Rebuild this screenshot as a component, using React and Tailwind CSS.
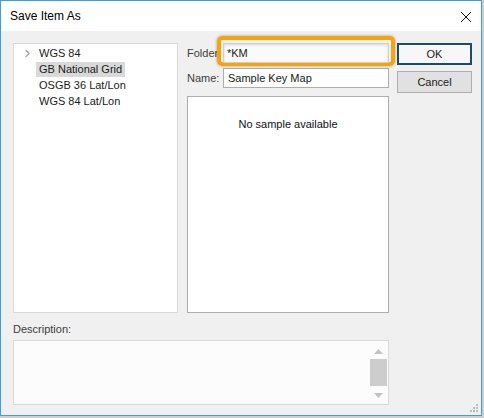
import { ChevronRight } from 'lucide-react'

const items = ['WGS 84', 'GB National Grid', 'OSGB 36 Lat/Lon', 'WGS 84 Lat/Lon']

function Grip() {
  const dots = [[7, 0], [4, 3], [7, 3], [1, 6], [4, 6], [7, 6]]
  return (
    <svg width="9" height="9" className="absolute right-[3px] bottom-[2px]">
      {dots.map(([x, y], i) => (
        <rect key={i} x={x} y={y} width="2" height="2" fill="#bcbcbc" />
      ))}
    </svg>
  )
}

export default function App() {
  return (
    <div className="w-[484px] h-[418px] bg-[#cfcfcf] font-['Liberation_Sans',Arial,sans-serif] text-[11px]">
      <div className="relative w-[482px] h-[416px] border border-[#3d9fe3] bg-[#f0f0f0] flex flex-col">
        <div className="h-[30px] bg-white flex items-center justify-between pl-[9px] pr-[9px] shrink-0">
          <span className="text-[12px] text-black">Save Item As</span>
          <svg width="12" height="12" viewBox="0 0 12 12" className="mt-[1px]">
            <path d="M1 1 L11 11 M11 1 L1 11" stroke="#111" strokeWidth="1" />
          </svg>
        </div>

        <div className="pl-[12px] pt-[12px] flex flex-col">
          <div className="flex">
            <div className="w-[165px] h-[270px] bg-white border border-[#d9d9d9] pt-[1px] pl-[8px]">
              {items.map((label, i) => (
                <div key={label} className="flex items-center h-[16px]">
                  <span className="w-[14px] flex items-center">
                    {i === 0 && <ChevronRight size={13} strokeWidth={2} className="text-[#9e9e9e] -ml-[1px]" />}
                  </span>
                  <span
                    className={
                      'px-[3px] h-[15px] leading-[15px] text-[#1a1a1a] ' + (i === 1 ? 'bg-[#d9d9d9]' : '')
                    }
                  >
                    {label}
                  </span>
                </div>
              ))}
            </div>

            <div className="ml-[9px] w-[202px] flex flex-col">
              <div className="flex items-center h-[20px]">
                <span className="w-[36px] text-[#3c3c3c]">Folder</span>
                <div className="relative w-[166px] h-[20px]">
                  <div className="absolute -left-[6px] -right-[6px] -top-[7px] -bottom-[3px] border-[4px] border-[#f5a50a] rounded-[5px] shadow-[0_0_3px_rgba(0,0,0,0.35)]" />
                  <div className="relative w-full h-full bg-[#fafafa] border border-[#d0d0d0] px-[3px] leading-[18px] text-[#1a1a1a] shadow-[inset_0_1px_3px_rgba(0,0,0,0.15)]">
                    *KM
                  </div>
                </div>
              </div>
              <div className="flex items-center h-[20px] mt-[5px]">
                <span className="w-[36px] text-[#3c3c3c]">Name:</span>
                <div className="w-[166px] h-[20px] bg-white border border-[#adadad] px-[4px] leading-[18px] text-[#1a1a1a]">
                  Sample Key Map
                </div>
              </div>
              <div className="mt-[8px] h-[217px] bg-white border border-[#adadad] flex justify-center pt-[19px] text-[#111]">
                No sample available
              </div>
            </div>

            <div className="ml-[8px] flex flex-col gap-[6px]">
              <div className="w-[75px] h-[22px] bg-[#f7f7f7] border-[2px] border-[#1a4a6c] flex items-center justify-center text-[#1a1a1a]">
                OK
              </div>
              <div className="w-[75px] h-[22px] bg-[#e1e1e1] border border-[#adadad] flex items-center justify-center text-[#1a1a1a]">
                Cancel
              </div>
            </div>
          </div>

          <div className="mt-[9px] text-[#3c3c3c] leading-[14px]">Description:</div>
          <div className="mt-[4px] w-[376px] h-[65px] bg-[#fcfcfc] border border-[#d9d9d9] flex justify-end pr-[1px]">
            <div className="w-[17px] flex flex-col items-center pt-[8px]">
              <svg width="9" height="5" viewBox="0 0 9 5">
                <path d="M0 5 L4.5 0 L9 5 Z" fill="#c2c2c2" />
              </svg>
              <div className="mt-[5px] w-[17px] h-[27px] bg-[#cdcdcd]" />
              <svg width="9" height="5" viewBox="0 0 9 5" className="mt-[7px]">
                <path d="M0 0 L9 0 L4.5 5 Z" fill="#c2c2c2" />
              </svg>
            </div>
          </div>
        </div>
        <Grip />
      </div>
    </div>
  )
}
